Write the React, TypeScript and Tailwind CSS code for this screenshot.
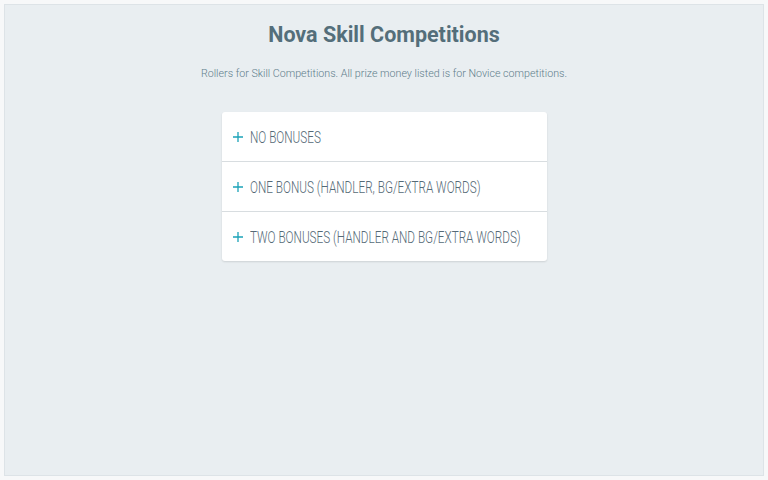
const sections = [
  'No Bonuses',
  'One Bonus (Handler, BG/Extra Words)',
  'Two Bonuses (Handler and BG/Extra Words)',
];

function PlusIcon() {
  return (
    <svg width="10" height="10" viewBox="0 0 10 10" fill="none" aria-hidden>
      <path d="M5 0v10M0 5h10" stroke="currentColor" strokeWidth="1.3" />
    </svg>
  );
}

export default function App() {
  return (
    <div className="h-[480px] w-[768px] bg-[#f7f8f9] p-1">
      <main className="h-full border border-[#dde3e7] bg-[#e9eef1] font-['Roboto',sans-serif]">
        <h1 className="pt-[16px] text-center text-[21.5px] font-bold leading-[28px] text-[#546e7a]">
          Nova Skill Competitions
        </h1>
        <p className="mt-[18px] text-center text-[10.7px] font-light leading-[14px] text-[#607d8b]">
          Rollers for Skill Competitions. All prize money listed is for Novice competitions.
        </p>
        <div className="mx-auto mt-[31px] w-[325px] rounded-[3px] bg-white shadow-[0_1px_2px_rgba(0,0,0,0.12)]">
          {sections.map((s, i) => (
            <button
              key={s}
              type="button"
              className={`flex h-[49px] w-full items-center gap-[7px] px-[11px] text-left ${
                i > 0 ? 'h-[50px] border-t border-[#d8dde0]' : ''
              }`}
            >
              <span className="text-[#1ba3b8]">
                <PlusIcon />
              </span>
              {/* condensed caption: light Roboto squeezed horizontally */}
              <span className="origin-left scale-x-[0.69] whitespace-nowrap pt-[2px] text-[17px] font-light uppercase leading-none text-[#556a76]">
                {s}
              </span>
            </button>
          ))}
        </div>
      </main>
    </div>
  );
}
